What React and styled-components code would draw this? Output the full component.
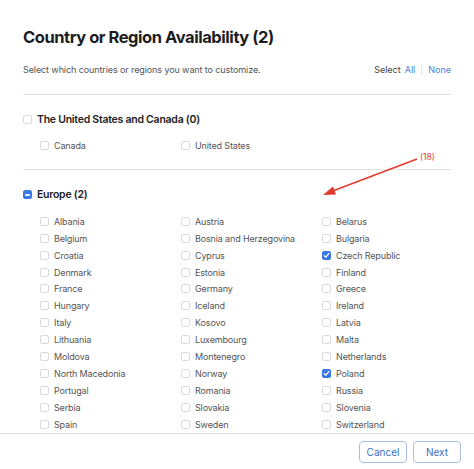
import styled, { createGlobalStyle } from "styled-components"

const GlobalStyle = createGlobalStyle`
  html, body {
    margin: 0;
    padding: 0;
    background: #ffffff;
  }
  body {
    font-family: "Inter", "Noto Sans", sans-serif;
    -webkit-font-smoothing: antialiased;
  }
`

const europe = [
  "Albania", "Austria", "Belarus",
  "Belgium", "Bosnia and Herzegovina", "Bulgaria",
  "Croatia", "Cyprus", "Czech Republic",
  "Denmark", "Estonia", "Finland",
  "France", "Germany", "Greece",
  "Hungary", "Iceland", "Ireland",
  "Italy", "Kosovo", "Latvia",
  "Lithuania", "Luxembourg", "Malta",
  "Moldova", "Montenegro", "Netherlands",
  "North Macedonia", "Norway", "Poland",
  "Portugal", "Romania", "Russia",
  "Serbia", "Slovakia", "Slovenia",
  "Spain", "Sweden", "Switzerland",
]
const checked = ["Czech Republic", "Poland"]

const Check = ({ state }) => (
  <Box $state={state}>
    {state === "on" && (
      <svg width="7" height="7" viewBox="0 0 7 7">
        <path d="M1.2 3.6 L2.8 5.2 L5.8 1.6" fill="none" stroke="#fff" strokeWidth="1.3" strokeLinecap="round" strokeLinejoin="round" />
      </svg>
    )}
    {state === "mixed" && <Dash />}
  </Box>
)

const App = () => {
  return (
    <>
      <GlobalStyle />
      <Dialog>
        <Head>
          <Title>Country or Region Availability (2)</Title>
          <SubRow>
            <Hint>Select which countries or regions you want to customize.</Hint>
            <SelectLinks>
              Select <Link>All</Link><Pipe>|</Pipe><Link>None</Link>
            </SelectLinks>
          </SubRow>
        </Head>
        <Scroll>
          <Section>
            <GroupHeader>
              <Check state="off" />
              The United States and Canada (0)
            </GroupHeader>
            <Grid>
              <Item><Check state="off" />Canada</Item>
              <Item><Check state="off" />United States</Item>
            </Grid>
          </Section>
          <Section>
            <GroupHeader>
              <Check state="mixed" />
              Europe (2)
            </GroupHeader>
            <Grid>
              {europe.map((c) => (
                <Item key={c}>
                  <Check state={checked.includes(c) ? "on" : "off"} />
                  {c}
                </Item>
              ))}
            </Grid>
          </Section>
        </Scroll>
        <Footer>
          <Button>Cancel</Button>
          <Button>Next</Button>
        </Footer>
        <Annotation>
          <svg width="474" height="469" viewBox="0 0 474 469">
            <line x1="417" y1="159" x2="330" y2="192" stroke="#e23b2e" strokeWidth="1.6" />
            <path d="M323 195 L333 186.5 L336 194.5 Z" fill="#e23b2e" />
          </svg>
          <Count>(18)</Count>
        </Annotation>
      </Dialog>
    </>
  )
}

export default App

const Dialog = styled.div`
  position: relative;
  width: 474px;
  height: 469px;
  display: flex;
  flex-direction: column;
  overflow: hidden;
  background: #fff;
`

const Head = styled.div`
  padding: 26px 23px 0 23px;
`

const Title = styled.h1`
  margin: 0;
  font-size: 16.5px;
  line-height: 22px;
  font-weight: 700;
  color: #1d1d1f;
  letter-spacing: -0.45px;
`

const SubRow = styled.div`
  margin-top: 14px;
  height: 14px;
  display: flex;
  align-items: center;
  justify-content: space-between;
  padding-bottom: 18px;
  border-bottom: 1px solid #e3e3e6;
`

const Hint = styled.span`
  font-size: 9px;
  letter-spacing: -0.1px;
  color: #555;
`

const SelectLinks = styled.span`
  font-size: 9px;
  color: #444;
  display: flex;
  align-items: center;
  gap: 4px;
`

const Link = styled.span`
  color: #4a7fd4;
`

const Pipe = styled.span`
  color: #d6d6d6;
  margin: 0 1px;
`

const Scroll = styled.div`
  flex: 1;
  overflow: hidden;
  padding: 0 23px;
`

const Section = styled.div`
  padding: 16.5px 0 15px 0;
  border-bottom: 1px solid #e3e3e6;
`

const GroupHeader = styled.div`
  display: flex;
  align-items: center;
  gap: 5px;
  height: 16px;
  font-size: 10.5px;
  letter-spacing: -0.25px;
  font-weight: 600;
  color: #222;
`

const Grid = styled.div`
  margin-top: 10px;
  padding-left: 17px;
  display: grid;
  grid-template-columns: repeat(3, 141px);
  grid-auto-rows: 16.9px;
`

const Item = styled.div`
  display: flex;
  align-items: center;
  gap: 5px;
  font-size: 9px;
  letter-spacing: -0.15px;
  color: #555;
  white-space: nowrap;
`

const Box = styled.span`
  width: 9px;
  height: 9px;
  box-sizing: border-box;
  border-radius: 2px;
  flex-shrink: 0;
  display: flex;
  align-items: center;
  justify-content: center;
  border: 1px solid ${(p) => (p.$state === "off" ? "#dadada" : "#3a78e6")};
  background: ${(p) => (p.$state === "off" ? "#fff" : "#3a78e6")};
`

const Dash = styled.span`
  width: 5px;
  height: 1.5px;
  background: #fff;
  border-radius: 1px;
`

const Footer = styled.div`
  height: 36px;
  box-sizing: border-box;
  border-top: 1px solid #e3e3e6;
  display: flex;
  justify-content: flex-end;
  align-items: flex-start;
  gap: 6px;
  padding: 7px 13px 0 0;
`

const Button = styled.button`
  width: 48px;
  height: 22px;
  padding: 0;
  border: 1px solid #a9bfe3;
  border-radius: 4px;
  background: #fff;
  color: #3a6fc6;
  font-family: "Inter", "Noto Sans", sans-serif;
  font-size: 10px;
`

const Annotation = styled.div`
  position: absolute;
  inset: 0;
  pointer-events: none;
`

const Count = styled.span`
  position: absolute;
  left: 420px;
  top: 152px;
  font-size: 8.5px;
  color: #e23b2e;
`
